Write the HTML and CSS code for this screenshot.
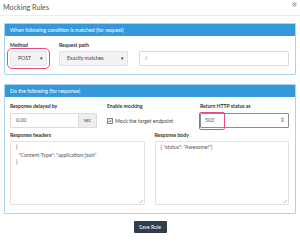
FILE: index.html
```html
<!DOCTYPE html>
<html lang="en">
<head>
<meta charset="UTF-8">
<title>Mocking Rules</title>
<link rel="stylesheet" href="styles.css">
</head>
<body>
<div class="modal">
 <header class="modal-head">
  <h1>Mocking Rules</h1>
  <svg class="close" width="5" height="5" viewBox="0 0 5 5"><rect x="0" y="0" width="5" height="5" fill="#e6e6e6"/><path d="M1 1L4 4M4 1L1 4" stroke="#888" stroke-width=".8"/></svg>
 </header>

 <section class="panel">
  <div class="panel-head">When following condition is matched (for request)</div>
  <div class="panel-body">
   <div class="row">
    <div class="field f-method">
     <label>Method</label>
     <div class="select hl">POST<i>&#9662;</i></div>
    </div>
    <div class="field f-match">
     <label>Request path</label>
     <div class="select">Exactly matches<i>&#9662;</i></div>
    </div>
    <div class="field f-path">
     <label>&nbsp;</label>
     <div class="input">/</div>
    </div>
   </div>
  </div>
 </section>

 <section class="panel">
  <div class="panel-head">Do the following (for response)</div>
  <div class="panel-body">
   <div class="row">
    <div class="field f-delay">
     <label>Response delayed by</label>
     <div class="group"><div class="input">0.00</div><span class="addon">sec</span></div>
    </div>
    <div class="field f-enable">
     <label>Enable mocking</label>
     <div class="check"><span class="box"><svg width="4" height="4" viewBox="0 0 4 4"><path d="M.7 2L1.6 3L3.3 .9" fill="none" stroke="#444" stroke-width=".7"/></svg></span>Mock the target endpoint</div>
    </div>
    <div class="field f-status">
     <label>Return HTTP status as</label>
     <div class="input status">503<span class="spin">&#8661;</span><span class="mark"></span></div>
    </div>
   </div>
   <div class="row row-text">
    <div class="field f-text">
     <label>Response headers</label>
     <textarea>{
  "Content-Type": "application/json"
}</textarea>
    </div>
    <div class="field f-text">
     <label>Response body</label>
     <textarea>{ "status": "Awesome!"}</textarea>
    </div>
   </div>
  </div>
 </section>

 <div class="actions"><button>Save Rule</button></div>
</div>
</body>
</html>
```

FILE: styles.css
```css
body{margin:0;background:#fff;font-family:Lato,"Open Sans",sans-serif;color:#333}
.modal{width:300px;height:245px;overflow:hidden}
.modal-head{display:flex;justify-content:space-between;align-items:center;height:15px;padding:0 3px;border-bottom:1px solid #ececec}
.modal-head h1{margin:0;font-size:7.2px;font-weight:400;color:#555}
.close{margin-top:-7px}
.panel{margin:7px 4px 0;border:1px solid #acd4f1;border-radius:1px}
.panel+.panel{margin-top:9px}
.panel-head{height:12px;line-height:12px;background:#3498db;color:#fff;font-size:5.2px;padding:0 5px}
.panel-body{padding:6px 6px 8px 5px}
.row{display:flex}
.field{display:flex;flex-direction:column}
.field label{font-size:5.1px;font-weight:700;line-height:7px;height:7px;color:#333}
.f-method{width:37px;margin-right:12px}
.f-match{width:69px;margin-right:11px}
.f-path{flex:1}
.f-method .select,.f-match .select,.f-path .input{margin-top:2px}
.select{position:relative;height:15px;line-height:13px;box-sizing:border-box;background:#f3f3f3;border:1px solid #e3e3e3;border-radius:1px;font-size:5.2px;color:#444;padding-left:7px}
.select i{position:absolute;right:3px;top:0;font-style:normal;font-size:4.5px;color:#333}
.input{height:15px;line-height:13px;box-sizing:border-box;background:#fff;border:1px solid #dcdcdc;border-radius:1px;font-size:5.2px;color:#555;padding-left:5px}
.hl{outline:1.5px solid #e54d7c;outline-offset:2px;border-radius:2px}
.f-delay{width:87px;margin-right:10px}
.f-enable{width:93px}
.f-status{width:89px}
.group{display:flex;margin-top:3px}
.group .input{flex:1;border-right:none}
.addon{width:19px;height:15px;line-height:13px;box-sizing:border-box;background:#eee;border:1px solid #dcdcdc;font-size:5.2px;color:#555;text-align:center}
.check{display:flex;align-items:center;height:15px;margin-top:3px;font-size:5.2px;color:#444}
.box{display:flex;align-items:center;justify-content:center;width:4px;height:4px;border:.5px solid #888;background:#eee;margin-right:2px}
.status{position:relative;margin-top:3px;border-color:#8c8c8c;padding-left:4px}
.spin{position:absolute;right:3px;top:0;font-size:5.5px;color:#666}
.mark{position:absolute;left:-2px;top:-2px;width:26px;height:18px;box-sizing:border-box;border:1.5px solid #e54d7c;border-radius:2px}
.row-text{margin-top:4px}
.f-text{flex:1}
.f-text+.f-text{margin-left:10px}
.f-text textarea{margin:2px 0 0;height:64px;box-sizing:border-box;border:1px solid #e2e2e2;border-radius:1px;resize:none;font-family:Lato,"Open Sans",sans-serif;font-size:5.2px;line-height:7.5px;color:#555;padding:2px 5px;background:linear-gradient(135deg,transparent 45%,#bbb 45%,#bbb 55%,transparent 55%,transparent 70%,#bbb 70%,#bbb 80%,transparent 80%) no-repeat right 1px bottom 1px/3px 3px,#fff}
.actions{display:flex;justify-content:center;margin-top:7px}
.actions button{width:33px;height:12px;padding:0;border:none;border-radius:1px;background:#2c3e50;color:#fff;font-family:Lato,"Open Sans",sans-serif;font-size:5.2px}
```
